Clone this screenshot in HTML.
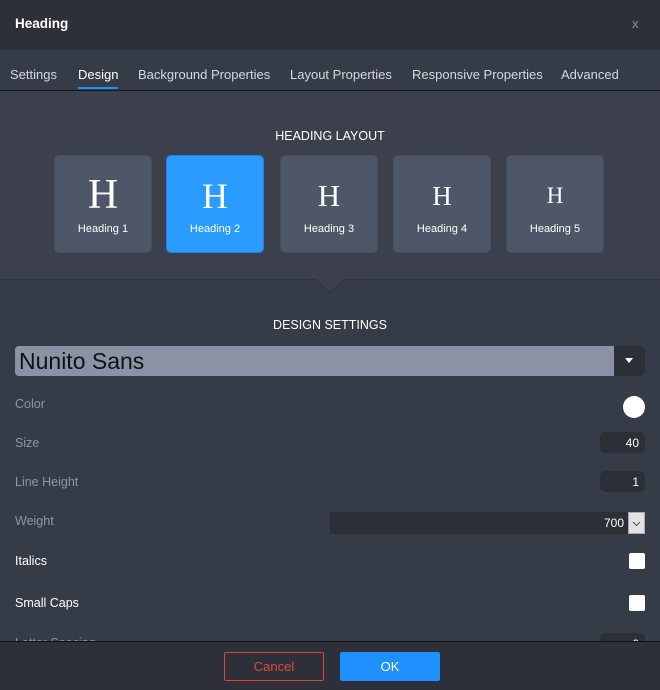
<!DOCTYPE html><html><head><style>
*{margin:0;padding:0;box-sizing:border-box}
body{width:660px;height:690px;overflow:hidden;background:#363b48;font-family:"Liberation Sans",sans-serif;position:relative;color:#fff}
.a{position:absolute}
.tab{position:absolute;top:67px;font-size:13px;color:#d5d8de}
.card{position:absolute;top:155px;width:98px;height:98px;border-radius:5px;background:#4e5767;text-align:center;border:1px solid #464e5c}
.card .h{font-family:"Liberation Serif",serif;color:#fff;position:absolute;left:0;right:0}
.card .l{position:absolute;top:67px;left:0;right:0;font-size:11px}
.lab{position:absolute;left:15px;font-size:12.5px;color:#8f96a3}
.num{position:absolute;left:600px;width:45px;height:21px;background:#2c2f35;border-radius:5px;font-size:12px;text-align:right;padding:4px 6px 0 0}
.cb{position:absolute;left:629px;width:16px;height:16px;background:#fff;border-radius:2px}
</style></head><body>
<div class="a" style="left:0;top:0;width:660px;height:50px;background:#2d3039"></div>
<div class="a" style="left:15px;top:16px;font-size:13.5px;font-weight:bold">Heading</div>
<div class="a" style="left:632px;top:16px;font-size:13px;color:#8a8f99">x</div>
<div class="a" style="left:0;top:50px;width:660px;height:40px;background:#363b48"></div>
<div class="tab" style="left:10px">Settings</div>
<div class="tab" style="left:78px;color:#fff">Design</div>
<div class="a" style="left:78px;top:87px;width:40px;height:2px;background:#1e90ff"></div>
<div class="tab" style="left:138px">Background Properties</div>
<div class="tab" style="left:290px">Layout Properties</div>
<div class="tab" style="left:412px">Responsive Properties</div>
<div class="tab" style="left:561px">Advanced</div>
<div class="a" style="left:0;top:90px;width:660px;height:1px;background:#15171b"></div>
<div class="a" style="left:0;top:91px;width:660px;height:188px;background:#3b404c"></div>
<div class="a" style="left:0;top:279px;width:660px;height:1px;background:#2d313a"></div>
<svg class="a" style="left:314px;top:279px" width="32" height="15"><path d="M0 0 L16 14 L32 0Z" fill="#3b404c"/><path d="M2 1 L16 14 L30 1" stroke="#2d313a" fill="none"/></svg>
<div class="a" style="left:0;top:129px;width:660px;text-align:center;font-size:12.5px">HEADING LAYOUT</div>
<div class="card" style="left:54px"><div class="h" style="top:17px;font-size:42px;line-height:44px">H</div><div class="l">Heading 1</div></div>
<div class="card" style="left:166px;background:#2a9cff;border-color:#1f84e0"><div class="h" style="top:21px;font-size:36px;line-height:38px">H</div><div class="l">Heading 2</div></div>
<div class="card" style="left:280px"><div class="h" style="top:24px;font-size:31px;line-height:32px">H</div><div class="l">Heading 3</div></div>
<div class="card" style="left:393px"><div class="h" style="top:26px;font-size:27px;line-height:28px">H</div><div class="l">Heading 4</div></div>
<div class="card" style="left:506px"><div class="h" style="top:28px;font-size:23px;line-height:24px">H</div><div class="l">Heading 5</div></div>
<div class="a" style="left:0;top:318px;width:660px;text-align:center;font-size:12.5px">DESIGN SETTINGS</div>
<div class="a" style="left:15px;top:346px;width:630px;height:30px;background:#8a93a6;border-radius:4px;overflow:hidden">
<div class="a" style="left:4px;top:2px;font-size:23px;color:#111">Nunito Sans</div>
<div class="a" style="left:599px;top:0;width:31px;height:30px;background:#2c2f35"></div>
<svg class="a" style="left:610px;top:12px" width="9" height="6"><path d="M0 0h8l-4 5z" fill="#fff"/></svg></div>
<div class="lab" style="top:397px">Color</div>
<div class="a" style="left:623px;top:396px;width:22px;height:22px;border-radius:50%;background:#fff"></div>
<div class="lab" style="top:436px">Size</div><div class="num" style="top:432px">40</div>
<div class="lab" style="top:475px">Line Height</div><div class="num" style="top:471px">1</div>
<div class="lab" style="top:514px">Weight</div>
<div class="a" style="left:330px;top:512px;width:298px;height:22px;background:#2c2f35;font-size:12px;text-align:right;padding:4px 4px 0 0">700</div>
<div class="a" style="left:628px;top:512px;width:17px;height:22px;background:#e2e2e2;border:1px solid #aaa"><svg style="position:absolute;left:3px;top:8px" width="9" height="6"><path d="M1 1l3.5 3.5L8 1" stroke="#555" fill="none"/></svg></div>
<div class="lab" style="top:554px;color:#fff">Italics</div><div class="cb" style="top:553px"></div>
<div class="lab" style="top:596px;color:#fff">Small Caps</div><div class="cb" style="top:595px"></div>
<div class="lab" style="top:636px">Letter Spacing</div><div class="num" style="top:633px">0</div>
<div class="a" style="left:0;top:641px;width:660px;height:49px;background:#2d3039;border-top:1px solid #111"></div>
<div class="a" style="left:224px;top:652px;width:100px;height:29px;border:1px solid #d9433a;border-radius:2px;color:#e0483e;font-size:13px;text-align:center;line-height:27px">Cancel</div>
<div class="a" style="left:340px;top:652px;width:100px;height:29px;background:#1e90ff;border-radius:2px;font-size:13px;text-align:center;line-height:29px">OK</div>
</body></html>
